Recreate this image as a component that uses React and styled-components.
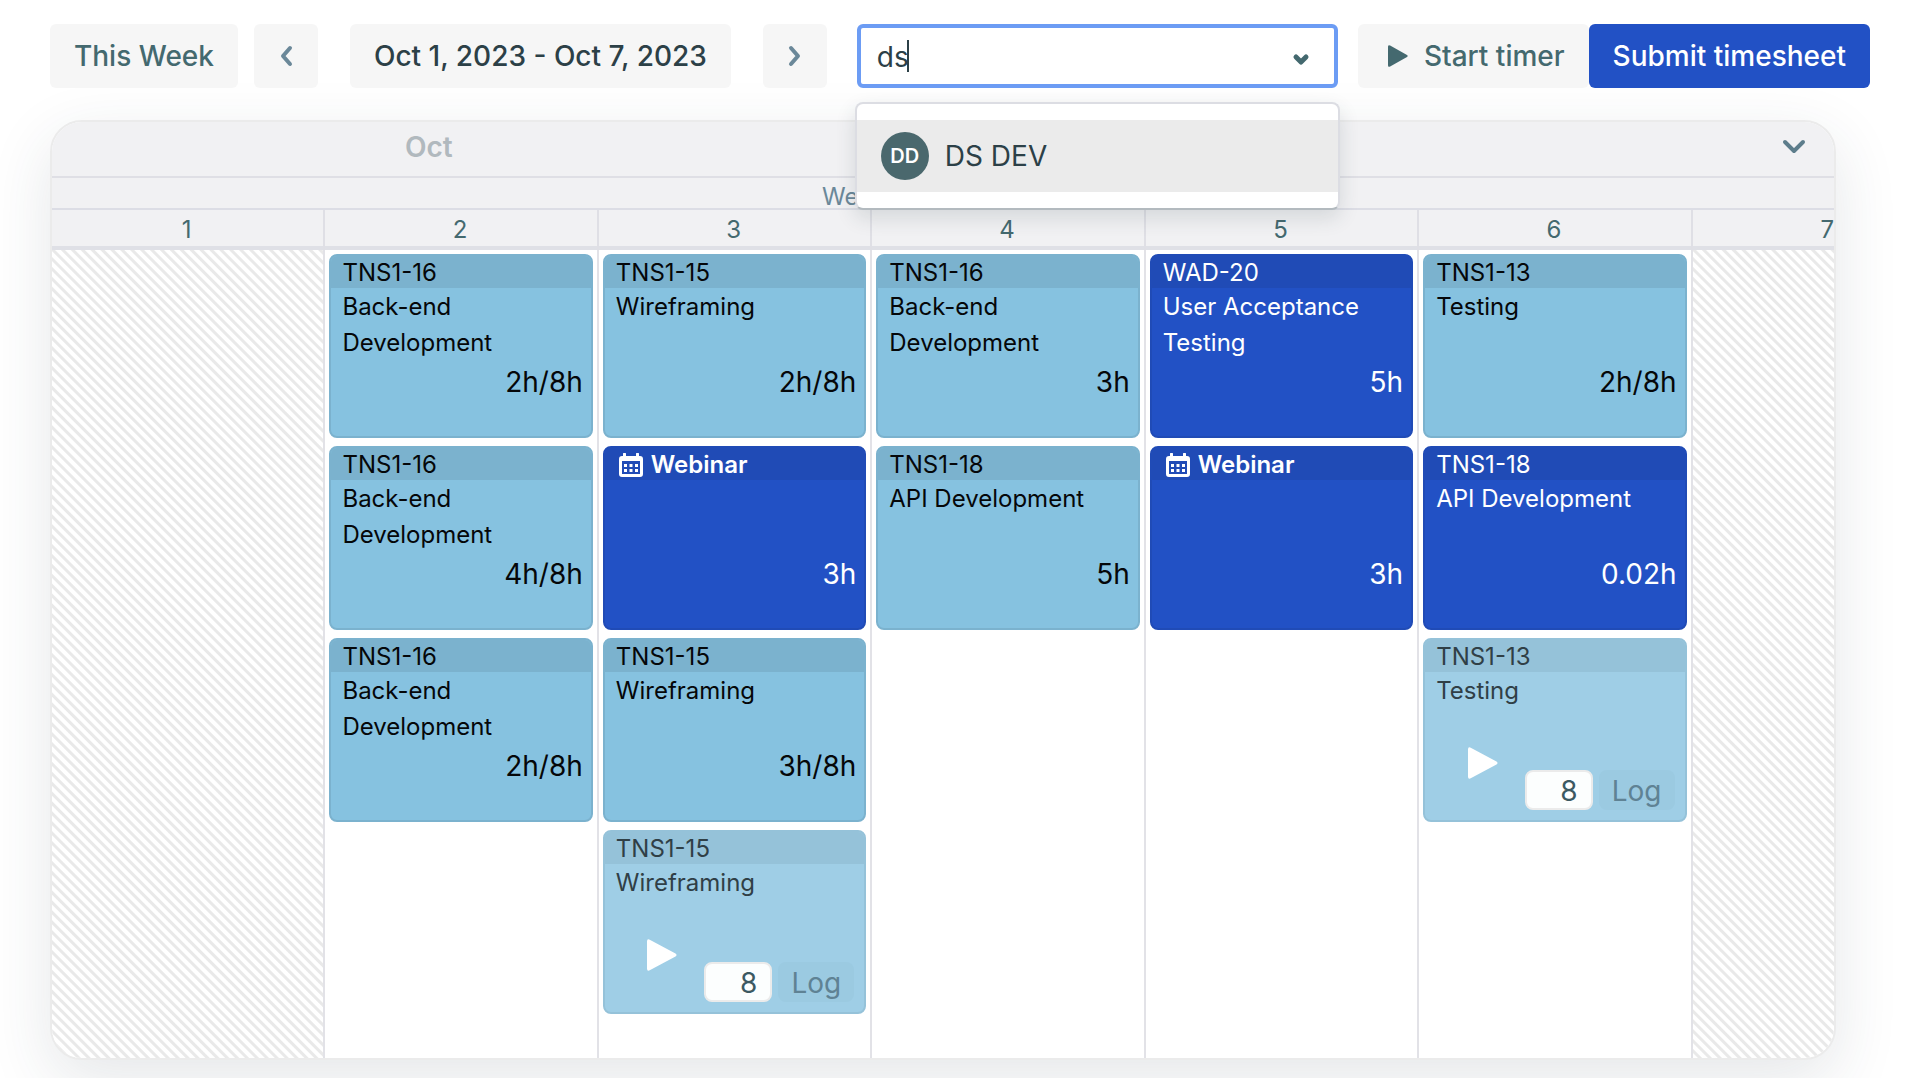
import React, { useState } from "react";
import styled, { createGlobalStyle, css } from "styled-components";

const GlobalStyle = createGlobalStyle`
  *, *::before, *::after { box-sizing: border-box; }
  body {
    margin: 0;
    background: #ffffff;
    color: #2c4047;
    font-family: Inter, "Liberation Sans", sans-serif;
    overflow: hidden;
  }
  button, input { font: inherit; color: inherit; }
`;

const Page = styled.main`
  display: flex;
  flex-direction: column;
  gap: 32px;
  min-height: 100vh;
  padding: 24px 60px 18px 50px;
`;

const Toolbar = styled.header`
  position: relative;
  z-index: 2;
  display: flex;
  align-items: center;
  height: 64px;
`;

const Button = styled.button`
  display: flex;
  align-items: center;
  justify-content: center;
  gap: 16px;
  height: 64px;
  padding: 0 24px 0 ${(p) => (p.$icon ? 30 : 24)}px;
  border: 0;
  border-radius: 6px;
  background: ${(p) => (p.$primary ? "#2251c5" : "#f6f6f6")};
  color: ${(p) => (p.$primary ? "#ffffff" : p.$strong ? "#2c4047" : "#44696f")};
  font-size: 28px;
  font-weight: 500;
  line-height: 36px;
  white-space: nowrap;
`;

const ArrowButton = styled(Button)`
  width: 64px;
  padding: 0;
  color: #6b8899;
`;

const WeekNav = styled.nav`
  display: flex;
  gap: 32px;
  margin: 0 30px 0 16px;
`;

const Actions = styled.div`
  display: flex;
  margin-left: 20px;
`;

const Combo = styled.div`
  position: relative;
  flex: 1;
  min-width: 300px;
`;

const ComboField = styled.div`
  display: flex;
  align-items: center;
  height: 64px;
  padding: 2px 24px 0 16px;
  border: 4px solid #6c9cf4;
  border-radius: 6px;
  background: #ffffff;
  color: #44696f;
`;

const ComboInput = styled.input`
  flex: 1;
  min-width: 0;
  padding: 0;
  border: 0;
  outline: 0;
  background: transparent;
  color: #2c4047;
  caret-color: transparent;
  font-size: 28px;
  line-height: 36px;
`;

const Caret = styled.span`
  position: absolute;
  top: 16px;
  left: 50px;
  width: 2px;
  height: 32px;
  background: #2c4047;
`;

const Menu = styled.ul`
  position: absolute;
  top: 78px;
  left: -2px;
  right: -2px;
  margin: 0;
  padding: 16px 0;
  list-style: none;
  border: 2px solid #dcdde3;
  border-bottom-color: #b3babf;
  border-radius: 8px;
  background: #ffffff;
  box-shadow: 0 8px 20px rgba(44, 64, 71, 0.14);
`;

const Option = styled.li`
  display: flex;
  align-items: center;
  gap: 16px;
  height: 72px;
  padding: 0 24px;
  background: #ebebeb;
  font-size: 28px;
  line-height: 36px;
`;

const Avatar = styled.span`
  display: flex;
  align-items: center;
  justify-content: center;
  width: 48px;
  height: 48px;
  border-radius: 50%;
  background: #4a686d;
  color: #ffffff;
  font-size: 20px;
  font-weight: 600;
`;

const Calendar = styled.section`
  display: flex;
  flex: 1;
  flex-direction: column;
  margin-right: 34px;
  overflow: hidden;
  border: 2px solid #ebebeb;
  border-radius: 32px;
  background: #ffffff;
  box-shadow: 0 20px 64px rgba(44, 54, 70, 0.12);
`;

const MonthRow = styled.div`
  display: flex;
  align-items: center;
  justify-content: space-between;
  height: 56px;
  padding: 0 20px 4px 353px;
  border-bottom: 2px solid #dfdfe5;
  background: #f1f1f3;
  color: #b1b9be;
  font-size: 28px;
  font-weight: 600;
  line-height: 36px;
`;

const Toggle = styled.button`
  display: flex;
  padding: 8px;
  border: 0;
  background: transparent;
  color: #5d7d8b;
`;

const WeekRow = styled.div`
  height: 32px;
  padding-left: 770px;
  border-bottom: 2px solid #dcdde5;
  background: #f1f1f3;
  color: #6b8899;
  font-size: 24px;
  line-height: 38px;
`;

const track = css`
  display: grid;
  grid-template-columns: repeat(7, 1fr);
  width: calc(100% + 132px);
`;

const DayRow = styled.div`
  ${track}
  height: 40px;
  border-bottom: 4px solid #dfe0e6;
  background: #f1f1f3;
`;

const DayName = styled.div`
  padding-right: 2px;
  border-right: 2px solid #dfdfe5;
  color: #44696f;
  font-size: 24px;
  line-height: 40px;
  text-align: center;
`;

const Days = styled.div`
  ${track}
  flex: 1;
`;

const Day = styled.div`
  display: flex;
  flex-direction: column;
  gap: 8px;
  padding: 4px;
  border-right: 2px solid #e2e2e7;
  ${(p) =>
    p.$off &&
    css`
      background: repeating-linear-gradient(
        45deg,
        #ffffff 0 3px,
        #e9e9e9 4px 6px,
        #ffffff 7px
      );
    `}
`;

const palettes = {
  light: { bg: "#86c2e0", head: "#7bb2ce", ink: "#050709" },
  dark: { bg: "#2251c5", head: "#204bb6", ink: "#ffffff" },
  planned: { bg: "#9fcee6", head: "#95c2d9", ink: "#303f46" },
};

const Card = styled.article`
  display: flex;
  flex-direction: column;
  height: 184px;
  overflow: hidden;
  border: 2px solid ${(p) => palettes[p.$tone].head};
  border-radius: 8px;
  background: ${(p) => palettes[p.$tone].bg};
  color: ${(p) => palettes[p.$tone].ink};
`;

const CardHead = styled.div`
  display: flex;
  align-items: center;
  gap: 8px;
  height: 32px;
  padding: 2px ${(p) => (p.$bold ? 14 : 11)}px 0;
  background: ${(p) => palettes[p.$tone].head};
  font-size: 24px;
  font-weight: ${(p) => (p.$bold ? 600 : 400)};
  line-height: 30px;
`;

const CardTitle = styled.div`
  width: 220px;
  height: 72px;
  padding: 1px 0 0 11px;
  font-size: 24px;
  line-height: 36px;
`;

const Hours = styled.div`
  padding-right: 8px;
  font-size: 28px;
  line-height: 44px;
  text-align: right;
`;

const LogRow = styled.form`
  display: flex;
  align-items: flex-end;
  justify-content: flex-end;
  gap: 6px;
  height: 80px;
  margin-top: -14px;
  padding-right: 10px;
`;

const PlayButton = styled.button`
  display: flex;
  align-items: center;
  align-self: flex-start;
  justify-content: center;
  width: 72px;
  height: 66px;
  padding: 0;
  border: 0;
  background: transparent;
  color: #ffffff;
`;

const HoursInput = styled.input`
  width: 68px;
  height: 40px;
  padding: 2px 13px 0;
  border: 2px solid #ebebeb;
  border-radius: 8px;
  background: #fcfefe;
  color: #3c5962;
  font-size: 28px;
  text-align: right;
`;

const LogButton = styled.button`
  width: 76px;
  height: 40px;
  padding: 0;
  border: 0;
  border-radius: 8px;
  background: #9bcae1;
  color: #5f8294;
  font-size: 28px;
  line-height: 42px;
`;

const Chevron = ({ d, w, h, stroke = 4 }) => (
  <svg width={w} height={h} viewBox={`0 0 ${w} ${h}`} fill="none" stroke="currentColor" strokeWidth={stroke} strokeLinecap="round" strokeLinejoin="round" aria-hidden="true">
    <path d={d} />
  </svg>
);

const Play = ({ w, h }) => (
  <svg width={w} height={h} viewBox="0 0 30 32" preserveAspectRatio="none" fill="currentColor" aria-hidden="true">
    <path d="M0 2.5Q0-1 3.2.9L28.5 14.5Q30.6 16 28.5 17.5L3.2 31.1Q0 33 0 29.500Z" />
  </svg>
);

const CalendarIcon = () => (
  <svg width="24" height="24" viewBox="0 0 24 24" fill="none" aria-hidden="true">
    <path fill="currentColor" fillRule="evenodd" d="M4 1a1 1 0 0 1 3 0v2h10V1a1 1 0 0 1 3 0v2h1a3 3 0 0 1 3 3v15a3 3 0 0 1-3 3H3a3 3 0 0 1-3-3V6a3 3 0 0 1 3-3h1ZM3 8v13h18V8Z" />
    <path fill="currentColor" d="M5 11h3v3H5zM10.500 11h3v3h-3zM16 11h3v3h-3zM5 16h3v3H5zM10.500 16h3v3h-3zM16 16h3v3h-3z" />
  </svg>
);

const days = [
  { day: 1, off: true, items: [] },
  {
    day: 2,
    items: [
      { tone: "light", id: "TNS1-16", title: "Back-end Development", hours: "2h/8h" },
      { tone: "light", id: "TNS1-16", title: "Back-end Development", hours: "4h/8h" },
      { tone: "light", id: "TNS1-16", title: "Back-end Development", hours: "2h/8h" },
    ],
  },
  {
    day: 3,
    items: [
      { tone: "light", id: "TNS1-15", title: "Wireframing", hours: "2h/8h" },
      { tone: "dark", id: "Webinar", event: true, hours: "3h" },
      { tone: "light", id: "TNS1-15", title: "Wireframing", hours: "3h/8h" },
      { tone: "planned", id: "TNS1-15", title: "Wireframing", log: 8 },
    ],
  },
  {
    day: 4,
    items: [
      { tone: "light", id: "TNS1-16", title: "Back-end Development", hours: "3h" },
      { tone: "light", id: "TNS1-18", title: "API Development", hours: "5h" },
    ],
  },
  {
    day: 5,
    items: [
      { tone: "dark", id: "WAD-20", title: "User Acceptance Testing", hours: "5h" },
      { tone: "dark", id: "Webinar", event: true, hours: "3h" },
    ],
  },
  {
    day: 6,
    items: [
      { tone: "light", id: "TNS1-13", title: "Testing", hours: "2h/8h" },
      { tone: "dark", id: "TNS1-18", title: "API Development", hours: "0.02h" },
      { tone: "planned", id: "TNS1-13", title: "Testing", log: 8 },
    ],
  },
  { day: 7, off: true, items: [] },
];

function Entry({ item }) {
  return (
    <Card $tone={item.tone}>
      <CardHead $tone={item.tone} $bold={item.event}>
        {item.event && <CalendarIcon />}
        {item.id}
      </CardHead>
      <CardTitle>{item.title}</CardTitle>
      {item.log ? (
        <LogRow onSubmit={(e) => e.preventDefault()}>
          <PlayButton type="button" aria-label={`Start timer for ${item.id}`}>
            <Play w={30} h={32} />
          </PlayButton>
          <HoursInput aria-label="Hours" defaultValue={item.log} />
          <LogButton type="submit">Log</LogButton>
        </LogRow>
      ) : (
        <Hours>{item.hours}</Hours>
      )}
    </Card>
  );
}

export default function App() {
  const [query, setQuery] = useState("ds");
  return (
    <>
      <GlobalStyle />
      <Page>
        <Toolbar>
          <Button type="button">This Week</Button>
          <WeekNav aria-label="Week">
            <ArrowButton type="button" aria-label="Previous week">
              <Chevron w={14} h={22} d="M11 3 4 11l7 8" />
            </ArrowButton>
            <Button type="button" $strong>Oct 1, 2023 - Oct 7, 2023</Button>
            <ArrowButton type="button" aria-label="Next week">
              <Chevron w={14} h={22} d="m3 3 7 8-7 8" />
            </ArrowButton>
          </WeekNav>
          <Combo>
            <ComboField>
              <ComboInput
                role="combobox"
                aria-label="User"
                aria-expanded="true"
                aria-controls="user-list"
                value={query}
                onChange={(e) => setQuery(e.target.value)}
              />
              <Chevron w={18} h={18} stroke={5} d="m4 9 5 5 5-5" />
            </ComboField>
            <Caret />
            <Menu id="user-list" role="listbox">
              <Option role="option" aria-selected="true">
                <Avatar>DD</Avatar>
                DS DEV
              </Option>
            </Menu>
          </Combo>
          <Actions>
            <Button type="button" $icon>
              <Play w={20} h={22} />
              Start timer
            </Button>
            <Button type="button" $primary>Submit timesheet</Button>
          </Actions>
        </Toolbar>
        <Calendar>
          <MonthRow>
            Oct
            <Toggle type="button" aria-label="Collapse">
              <Chevron w={24} h={16} d="m3 3 9 9 9-9" />
            </Toggle>
          </MonthRow>
          <WeekRow>Week 40</WeekRow>
          <DayRow>
            {days.map((d) => (
              <DayName key={d.day}>{d.day}</DayName>
            ))}
          </DayRow>
          <Days>
            {days.map((d) => (
              <Day key={d.day} $off={d.off}>
                {d.items.map((item, i) => (
                  <Entry key={i} item={item} />
                ))}
              </Day>
            ))}
          </Days>
        </Calendar>
      </Page>
    </>
  );
}
